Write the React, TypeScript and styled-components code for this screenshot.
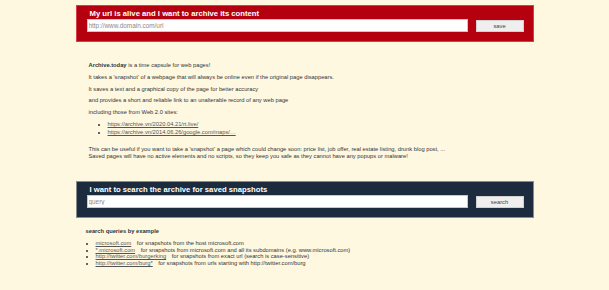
import styled, { createGlobalStyle } from 'styled-components';

const GlobalStyle = createGlobalStyle`
  html, body {
    margin: 0;
    padding: 0;
    background: #fff8e1;
  }
  body {
    font-family: "Liberation Sans", Arial, sans-serif;
    color: #333;
    -webkit-text-size-adjust: none;
  }
`;

const examples = [
  { query: 'microsoft.com', text: 'for snapshots from the host microsoft.com' },
  { query: '*.microsoft.com', text: 'for snapshots from microsoft.com and all its subdomains (e.g. www.microsoft.com)' },
  { query: 'http://twitter.com/burgerking', text: 'for snapshots from exact url (search is case-sensitive)' },
  { query: 'http://twitter.com/burg*', text: 'for snapshots from urls starting with http://twitter.com/burg' }
];

export default function App() {
  return (
    <Page>
      <GlobalStyle />
      <FormBox $tone="red">
        <BoxTitle>My url is alive and I want to archive its content</BoxTitle>
        <FormRow>
          <UrlInput placeholder="http://www.domain.com/url" />
          <Button>save</Button>
        </FormRow>
      </FormBox>

      <Intro>
        <Line>
          <b>Archive.today</b> is a time capsule for web pages!
        </Line>
        <Line>It takes a 'snapshot' of a webpage that will always be online even if the original page disappears.</Line>
        <Line>It saves a text and a graphical copy of the page for better accuracy</Line>
        <Line>and provides a short and reliable link to an unalterable record of any web page</Line>
        <Line>including those from Web 2.0 sites:</Line>
        <SampleList>
          <li>
            <Link href="#">https://archive.vn/2020.04.21/rt.live/</Link>
          </li>
          <li>
            <Link href="#">https://archive.vn/2014.06.26/google.com/maps/…</Link>
          </li>
        </SampleList>
        <Note>
          This can be useful if you want to take a 'snapshot' a page which could change soon: price list, job offer, real
          estate listing, drunk blog post, ...
          <br />
          Saved pages will have no active elements and no scripts, so they keep you safe as they cannot have any popups or
          malware!
        </Note>
      </Intro>

      <FormBox $tone="navy">
        <BoxTitle>I want to search the archive for saved snapshots</BoxTitle>
        <FormRow>
          <UrlInput placeholder="query" />
          <Button>search</Button>
        </FormRow>
      </FormBox>

      <Examples>
        <ExamplesTitle>search queries by example</ExamplesTitle>
        <ExampleList>
          {examples.map((ex) => (
            <li key={ex.query}>
              <Link href="#">{ex.query}</Link>
              <Hint>{ex.text}</Hint>
            </li>
          ))}
        </ExampleList>
      </Examples>
    </Page>
  );
}

const Page = styled.div`
  width: 458px;
  margin: 0 auto;
  padding-top: 5px;
`;

const FormBox = styled.div<{ $tone: 'red' | 'navy' }>`
  box-sizing: border-box;
  width: 458px;
  height: 37px;
  padding: 3px 9px 0 10px;
  background: ${(p) => (p.$tone === 'red' ? '#b5000f' : '#1d2b3e')};
  border: 1px solid ${(p) => (p.$tone === 'red' ? '#d2414b' : '#8a8d8f')};
`;

const BoxTitle = styled.div`
  padding-left: 3px;
  height: 9px;
  line-height: 9px;
  font-size: 7.7px;
  font-weight: bold;
  color: #fff;
  white-space: nowrap;
`;

const FormRow = styled.div`
  display: flex;
  align-items: center;
  gap: 8px;
  margin-top: 1px;
`;

const UrlInput = styled.input`
  flex: 1;
  box-sizing: border-box;
  height: 13px;
  margin: 0;
  padding: 0 1px;
  border: 1px solid #c8c8c8;
  background: #fff;
  font-family: "Liberation Sans", Arial, sans-serif;
  font-size: 6.4px;
  outline: none;
  &::placeholder {
    color: #8a8a8a;
  }
`;

const Button = styled.button`
  box-sizing: border-box;
  width: 48px;
  height: 12px;
  margin: 0;
  padding: 0;
  background: #efefef;
  border: 1px solid #d0d0d0;
  font-family: "Liberation Sans", Arial, sans-serif;
  font-size: 5.8px;
  color: #444;
`;

const Intro = styled.div`
  padding: 20px 0 0 13px;
  font-size: 5.76px;
  margin-bottom: 21.5px;
`;

const Line = styled.p`
  margin: 0 0 4.75px;
  line-height: 7px;
  white-space: nowrap;
`;

const SampleList = styled.ul`
  margin: 5.25px 0 9.25px;
  padding-left: 19px;
  line-height: 7.5px;
`;

const Link = styled.a`
  color: #555;
  text-decoration: underline;
`;

const Note = styled.p`
  margin: 0;
  line-height: 7px;
`;

const Examples = styled.div`
  padding: 9.5px 0 0 10px;
  font-size: 5.76px;
`;

const ExamplesTitle = styled.div`
  font-weight: bold;
  line-height: 7px;
`;

const ExampleList = styled.ul`
  margin: 5.7px 0 0;
  padding-left: 10px;
  line-height: 6.6px;
`;

const Hint = styled.span`
  margin-left: 5.5px;
`;
